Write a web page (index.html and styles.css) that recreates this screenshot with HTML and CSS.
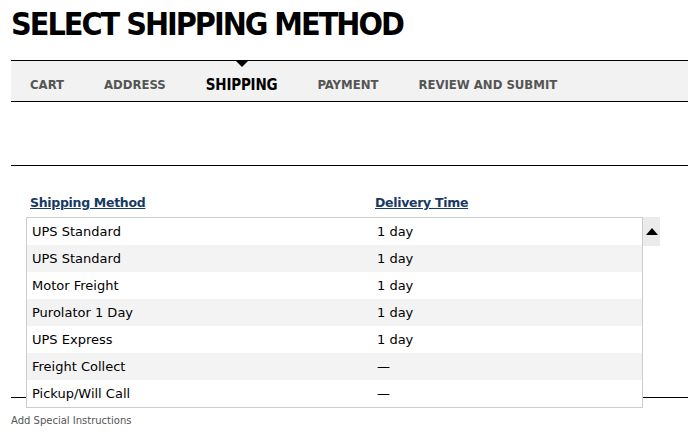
FILE: index.html
```html
<!DOCTYPE html>
<html>
<head>
<meta charset="utf-8">
<link rel="stylesheet" href="styles.css">
</head>
<body>
<div class="page">
  <h1 class="title">SELECT SHIPPING METHOD</h1>
  <nav class="steps">
    <span class="step">CART</span>
    <span class="step">ADDRESS</span>
    <span class="step active">SHIPPING</span>
    <span class="step">PAYMENT</span>
    <span class="step">REVIEW AND SUBMIT</span>
  </nav>
  <div class="rule top-rule"></div>
  <section class="method">
    <div class="heads">
      <a class="head col1">Shipping Method</a>
      <a class="head col2">Delivery Time</a>
    </div>
    <div class="select">
      <div class="selected">
        <span class="col1">UPS Standard</span>
        <span class="col2">1 day</span>
      </div>
      <div class="scroll"><span class="arrow"></span></div>
      <ul class="options">
        <li class="opt"><span class="col1">UPS Standard</span><span class="col2">1 day</span></li>
        <li class="opt"><span class="col1">Motor Freight</span><span class="col2">1 day</span></li>
        <li class="opt"><span class="col1">Purolator 1 Day</span><span class="col2">1 day</span></li>
        <li class="opt"><span class="col1">UPS Express</span><span class="col2">1 day</span></li>
        <li class="opt"><span class="col1">Freight Collect</span><span class="col2">&mdash;</span></li>
        <li class="opt"><span class="col1">Pickup/Will Call</span><span class="col2">&mdash;</span></li>
      </ul>
    </div>
  </section>
  <div class="rule bottom-rule"></div>
  <div class="instructions">Add Special Instructions</div>
</div>
</body>
</html>
```
FILE: styles.css
```css
html, body {
  margin: 0;
  padding: 0;
  background: #fff;
}
body {
  font-family: "DejaVu Sans", sans-serif;
  color: #000;
}
.page {
  padding: 0 12px 0 11px;
}
.title {
  margin: 0;
  padding-top: 6px;
  height: 60px;
  box-sizing: border-box;
  font-family: "DejaVu Sans Condensed", "DejaVu Sans", sans-serif;
  font-stretch: condensed;
  font-size: 32px;
  line-height: 36px;
  font-weight: bold;
  letter-spacing: -2px;
}
.steps {
  position: relative;
  display: flex;
  align-items: center;
  height: 32px;
  padding-top: 8px;
  background: #f2f2f2;
  border-top: 1px solid #000;
  border-bottom: 1px solid #000;
  padding-left: 19px;
  box-sizing: content-box;
}
.step {
  font-family: "DejaVu Sans Condensed", "DejaVu Sans", sans-serif;
  font-stretch: condensed;
  font-size: 13px;
  line-height: 18px;
  font-weight: bold;
  color: #555;
  margin-right: 40px;
  letter-spacing: 0;
}
.step.active {
  font-size: 15px;
  color: #000;
  position: relative;
  letter-spacing: -0.2px;
}
.step.active::before {
  content: "";
  position: absolute;
  left: 50%;
  top: -15px;
  margin-left: -6px;
  border-left: 6px solid transparent;
  border-right: 6px solid transparent;
  border-top: 6px solid #000;
}
.rule {
  height: 1px;
  background: #000;
}
.top-rule {
  margin-top: 63px;
}
.method {
  position: relative;
  padding-left: 15px;
  margin-top: 29px;
}
.heads {
  display: flex;
  height: 22px;
  padding-left: 4px;
}
.head {
  font-size: 12.5px;
  font-weight: bold;
  color: #173a64;
  text-decoration: underline;
  letter-spacing: -0.3px;
}
.col1 {
  width: 345px;
  flex: none;
}
.select {
  position: relative;
  width: 634px;
}
.selected {
  display: flex;
  align-items: center;
  width: 617px;
  height: 29px;
  box-sizing: border-box;
  border: 1px solid #ccc;
  padding-left: 5px;
  font-size: 13px;
  background: #fff;
}
.scroll {
  position: absolute;
  left: 617px;
  top: 0;
  width: 17px;
  height: 29px;
  background: #ebebeb;
  display: flex;
  align-items: center;
  justify-content: center;
}
.arrow {
  width: 0;
  height: 0;
  border-left: 6px solid transparent;
  border-right: 6px solid transparent;
  border-bottom: 7px solid #000;
}
.options {
  position: absolute;
  left: 0;
  top: 28px;
  width: 617px;
  margin: 0;
  padding: 0;
  list-style: none;
  box-sizing: border-box;
  border: 1px solid #ccc;
  border-top: none;
  background: #fff;
  z-index: 2;
}
.opt {
  display: flex;
  align-items: center;
  height: 27px;
  padding-left: 5px;
  font-size: 13px;
}
.opt:nth-child(odd) {
  background: #f3f3f3;
}
.bottom-rule {
  margin-top: 151px;
}
.instructions {
  margin-top: 17px;
  font-size: 10px;
  color: #555;
}
```
